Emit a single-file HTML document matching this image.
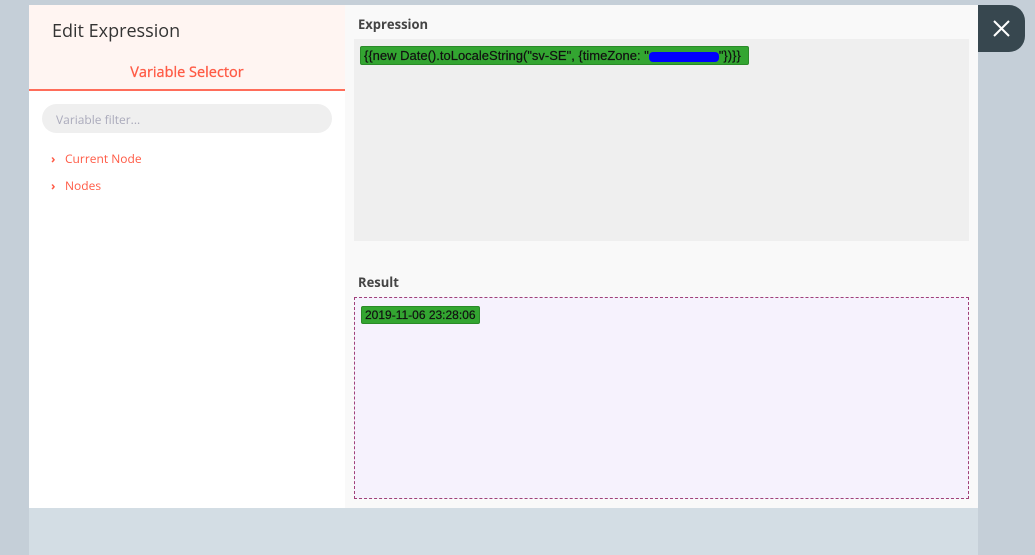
<!DOCTYPE html>
<html><head><style>
*{margin:0;padding:0;box-sizing:border-box}
body{width:1035px;height:555px;background:#c5cfd8;position:relative;overflow:hidden;font-family:"Open Sans","DejaVu Sans","Liberation Sans",sans-serif}
.under{position:absolute;left:29px;top:508px;width:949px;height:47px;background:#d3dde4}
.dlg{position:absolute;left:29px;top:5px;width:949px;height:503px;background:#fff}
.left{position:absolute;left:0;top:0;width:316px;height:503px;background:#fff}
.head{height:86px;background:#fff5f2;border-bottom:2px solid #ff6d5a;position:relative}
.title{position:absolute;left:23px;top:14px;font-size:18px;color:#333}
.vs{position:absolute;left:0;width:316px;top:58px;text-align:center;color:#ff5a45;font-size:14.5px;font-weight:500;-webkit-text-stroke:0.3px #ff5a45}
.filter{position:absolute;left:13px;top:99px;width:290px;height:29px;background:#efefef;border-radius:15px;font-size:12px;color:#aab;padding:7px 14px}
.item{position:absolute;left:22px;font-size:12px;color:#ff5a45}
.item b{display:inline-block;width:14px;font-weight:bold}
.right{position:absolute;left:316px;top:0;width:633px;height:503px;background:#f9f9f9}
.lbl{position:absolute;left:13px;font-size:13px;font-weight:bold;color:#444}
.ebox{position:absolute;left:9px;top:34px;width:615px;height:202px;background:#efefef}
.chip{position:absolute;background:#33a531;border:1px solid #2a8a28;border-radius:2px;font-family:"Liberation Sans",sans-serif;font-size:13px;color:#111;padding:1px 3px;white-space:nowrap;-webkit-text-stroke:0.2px #111;overflow:hidden}
.rbox{position:absolute;left:9px;top:292px;width:615px;height:202px;background:#f6f2fd;border:1px dashed #a0407a}
.close{position:absolute;left:978px;top:5px;width:47px;height:47px;background:#37474f;border-radius:0 16px 16px 0}
</style></head><body>
<div class="under"></div>
<div class="dlg">
 <div class="left">
  <div class="head"><div class="title">Edit Expression</div><div class="vs">Variable Selector</div></div>
  <div class="filter">Variable filter...</div>
  <div class="item" style="top:145px"><b>›</b>Current Node</div>
  <div class="item" style="top:172px"><b>›</b>Nodes</div>
 </div>
 <div class="right">
  <div class="lbl" style="top:10px">Expression</div>
  <div class="ebox"><div class="chip" style="left:6px;top:7px;width:389px">{{new Date().toLocaleString("sv-SE", {timeZone: "<span style="display:inline-block;width:70px;height:10px;background:#0000ff;border-radius:4px;vertical-align:middle"></span>"})}}</div></div>
  <div class="lbl" style="top:268px">Result</div>
  <div class="rbox"><div class="chip" style="left:6px;top:8px;font-size:12px;width:119px">2019-11-06 23:28:06</div></div>
 </div>
</div>
<div class="close"><svg width="47" height="47"><path d="M16 16L31 31M31 16L16 31" stroke="#fff" stroke-width="2"/></svg></div>
</body></html>
